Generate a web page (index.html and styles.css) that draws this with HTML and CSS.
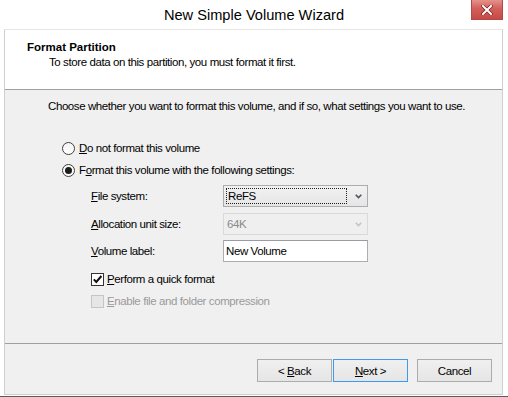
FILE: index.html
```html
<!DOCTYPE html>
<html>
<head>
<meta charset="utf-8">
<title>New Simple Volume Wizard</title>
<link rel="stylesheet" href="styles.css">
</head>
<body>
<div class="window">
  <div class="titlebar">
    <div class="title">New Simple Volume Wizard</div>
    <div class="close">
      <svg width="12" height="10" viewBox="0 0 12 10"><path d="M2 1 L10 9 M10 1 L2 9" stroke="#7a2323" stroke-width="3.4" stroke-linecap="square"/><path d="M2 1 L10 9 M10 1 L2 9" stroke="#fff" stroke-width="2" stroke-linecap="square"/></svg>
    </div>
  </div>
  <div class="client">
    <div class="header">
      <div class="h-title">Format Partition</div>
      <div class="h-sub">To store data on this partition, you must format it first.</div>
    </div>
    <div class="body">
      <div class="intro">Choose whether you want to format this volume, and if so, what settings you want to use.</div>
      <div class="radio-row first"><span class="radio"></span><span class="lbl"><u>D</u>o not format this volume</span></div>
      <div class="radio-row"><span class="radio checked"></span><span class="lbl">F<u>o</u>rmat this volume with the following settings:</span></div>
      <div class="settings">
        <div class="field">
          <span class="flabel"><u>F</u>ile system:</span>
          <div class="combo">
            <span class="combo-text focus">ReFS</span>
            <span class="arrow"><svg width="7" height="5" viewBox="0 0 7 5"><path d="M0.7 0.8 L3.5 3.6 L6.3 0.8" fill="none" stroke="#4b5560" stroke-width="1.6"/></svg></span>
          </div>
        </div>
        <div class="field second">
          <span class="flabel"><u>A</u>llocation unit size:</span>
          <div class="combo disabled">
            <span class="combo-text">64K</span>
            <span class="arrow"><svg width="7" height="5" viewBox="0 0 7 5"><path d="M0.7 0.8 L3.5 3.6 L6.3 0.8" fill="none" stroke="#c4c4c4" stroke-width="1.6"/></svg></span>
          </div>
        </div>
        <div class="field third">
          <span class="flabel"><u>V</u>olume label:</span>
          <div class="textbox">New Volume</div>
        </div>
      </div>
      <div class="check-row first">
        <span class="checkbox"><svg width="11" height="11" viewBox="0 0 11 11"><path d="M1.8 5.4 L4.3 8 L9.4 2" fill="none" stroke="#111" stroke-width="2"/></svg></span>
        <span class="lbl"><u>P</u>erform a quick format</span>
      </div>
      <div class="check-row disabled">
        <span class="checkbox"></span>
        <span class="lbl"><u>E</u>nable file and folder compression</span>
      </div>
    </div>
    <div class="footer">
      <div class="btn"><span>&lt; <u>B</u>ack</span></div>
      <div class="btn default"><span><u>N</u>ext &gt;</span></div>
      <div class="btn cancel"><span>Cancel</span></div>
    </div>
  </div>
</div>
</body>
</html>
```

FILE: styles.css
```css
html, body {
  margin: 0;
  padding: 0;
}

body {
  width: 508px;
  height: 397px;
  overflow: hidden;
  background: #ffffff;
  color: #000000;
  font-family: "Liberation Sans", Arial, sans-serif;
  font-size: 11.5px;
  letter-spacing: -0.41px;
}

.window {
  width: 508px;
  height: 397px;
  box-sizing: border-box;
  border-bottom: 1px solid #5a5a5a;
  background: #ffffff;
  display: flex;
  flex-direction: column;
}

.titlebar {
  height: 29px;
  display: grid;
  grid-template-columns: 1fr auto 1fr;
  align-items: center;
}

.title {
  grid-column: 2;
  font-size: 14.6px;
  letter-spacing: 0;
  line-height: 18px;
  margin-top: 1px;
}

.close {
  grid-column: 3;
  justify-self: end;
  align-self: start;
  margin-right: 5px;
  width: 32px;
  height: 20px;
  box-sizing: border-box;
  border: 1px solid #b04a4a;
  border-top: none;
  background: linear-gradient(#e4928a, #d35f5a 45%, #c64a45);
  display: flex;
  align-items: center;
  justify-content: center;
}

.client {
  margin-left: 4px;
  width: 499px;
  height: 366px;
  box-sizing: border-box;
  border: 1px solid #cfcfcf;
  border-top-color: #e6e6e6;
  display: flex;
  flex-direction: column;
}

.header {
  height: 60px;
  box-sizing: border-box;
  background: #ffffff;
  border-bottom: 1px solid #a0a0a0;
  padding: 10px 0 0 22px;
  line-height: 15px;
}

.h-title {
  font-weight: bold;
  letter-spacing: 0;
}

.h-sub {
  padding-left: 22px;
}

.body {
  flex: 1;
  background: #f0f0f0;
  border-bottom: 1px solid #a0a0a0;
  padding: 9px 0 0 43px;
  line-height: 15px;
}

.radio-row {
  height: 22px;
  display: flex;
  align-items: center;
  margin-left: 14px;
}

.radio-row.first {
  margin-top: 23px;
}

.radio {
  width: 13px;
  height: 13px;
  box-sizing: border-box;
  border: 1px solid #3f3f3f;
  border-radius: 50%;
  background: linear-gradient(#f4f4f4, #ffffff);
  display: flex;
  align-items: center;
  justify-content: center;
}

.radio.checked::after {
  content: "";
  width: 7px;
  height: 7px;
  border-radius: 50%;
  background: #1c1c1c;
}

.lbl {
  margin-left: 4px;
}

.settings {
  margin: 4px 0 0 43px;
}

.field {
  display: grid;
  grid-template-columns: 132px 145px;
  align-items: center;
  height: 22px;
}

.field.second {
  margin-top: 6px;
}

.field.third {
  margin-top: 5px;
}

.combo {
  height: 22px;
  box-sizing: border-box;
  border: 1px solid #acacac;
  background: linear-gradient(#f2f2f2, #e5e5e5);
  display: flex;
  align-items: stretch;
}

.combo-text {
  flex: 1;
  padding-left: 3px;
  display: flex;
  align-items: center;
}

.combo-text.focus {
  margin: 2px 3px 2px 2px;
  padding-left: 1px;
  border: 1px dotted #202020;
}

.arrow {
  width: 17px;
  display: flex;
  align-items: center;
  justify-content: center;
}

.combo.disabled {
  border-color: #d9d9d9;
  background: #efefef;
  color: #8a8a8a;
}

.textbox {
  height: 22px;
  box-sizing: border-box;
  border: 1px solid #abadb3;
  border-top-color: #9a9ca3;
  background: #ffffff;
  padding-left: 2px;
  display: flex;
  align-items: center;
}

.check-row {
  height: 22px;
  margin-left: 43px;
  display: flex;
  align-items: center;
}

.check-row.first {
  margin-top: 6px;
}

.checkbox {
  width: 13px;
  height: 13px;
  box-sizing: border-box;
  border: 1px solid #333333;
  background: #ffffff;
  display: flex;
  align-items: center;
  justify-content: center;
}

.check-row .lbl {
  margin-left: 3px;
}

.check-row.disabled .checkbox {
  border-color: #c5c5c5;
  background: #e6e6e6;
}

.check-row.disabled .lbl {
  color: #9a9a9a;
}

.footer {
  height: 50px;
  background: #f0f0f0;
  box-sizing: border-box;
  padding: 15px 10px 0 0;
  display: flex;
  justify-content: flex-end;
  align-items: flex-start;
}

.btn {
  width: 75px;
  height: 23px;
  box-sizing: border-box;
  border: 1px solid #acacac;
  background: linear-gradient(#f0f0f0, #e5e5e5);
  display: flex;
  align-items: center;
  justify-content: center;
}

.btn.default {
  margin-left: 1px;
  border-color: #3c9bf0;
}

.btn.cancel {
  margin-left: 9px;
}
```
